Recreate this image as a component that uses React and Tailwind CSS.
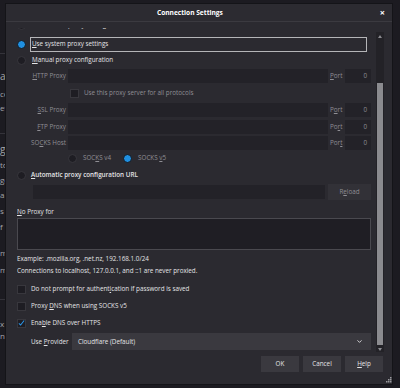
import { ChevronDown } from 'lucide-react';

function Radio({ on }) {
  return (
    <span
      className={
        on
          ? 'block w-[9px] h-[9px] shrink-0 rounded-full bg-[#1f8fe0] border border-[#16161b]'
          : 'block w-[9px] h-[9px] shrink-0 rounded-full bg-[#1e1d23] border border-[#38373d]'
      }
    />
  );
}

function Check({ on }) {
  return (
    <span className="flex items-center justify-center w-[9px] h-[9px] shrink-0 bg-[#1e1d23] border border-[#38373d]">
      {on && (
        <svg width="8" height="8" viewBox="0 0 8 8" fill="none">
          <path d="M1 4.3 L3 6.3 L7 1.2" stroke="#2a97ea" strokeWidth="1.2" />
        </svg>
      )}
    </span>
  );
}

function K({ children }) {
  return <span className="underline underline-offset-1">{children}</span>;
}

function ProxyRow({ label, port, mt }) {
  return (
    <div className={`flex items-center h-[14px] ${mt}`}>
      <span className="w-[51px] pr-[2px] text-right text-[#8f8e94]">{label}</span>
      <div className="flex-1 h-full bg-[#232228]" />
      <span className="w-[17px] pl-[2px] text-[#8f8e94]">{port}</span>
      <div className="w-[26px] h-full bg-[#232228] text-right pr-[4px] leading-[14px] text-[#8f8e94]">0</div>
    </div>
  );
}

export default function App() {
  return (
    <div className="w-[400px] h-[388px] flex overflow-hidden bg-[#1c1b21] text-[6.3px] text-[#e4e4e6] font-['Open_Sans',sans-serif]">
      {/* page behind the dialog */}
      <div className="w-[5px] shrink-0 overflow-hidden whitespace-nowrap text-[#a3a3a8] text-[8px] leading-[10px]">
        <div className="mt-[53px] border-t border-[#34333a]" />
        <div className="mt-[17px] text-[10px]">adv</div>
        <div className="mt-[8px]">conn</div>
        <div className="mt-[4px]">etw</div>
        <div className="mt-[20px] border-t border-[#34333a]" />
        <div className="mt-[10px] text-[10px]">gen</div>
        <div className="mt-[6px]">to</div>
        <div className="mt-[5px]">gc</div>
        <div className="mt-[5px]">a</div>
        <div className="mt-[6px]">s U</div>
        <div className="mt-[6px]">f</div>
        <div className="mt-[16px]">m</div>
        <div className="mt-[7px]">m</div>
        <div className="mt-[24px] border-t border-[#34333a]" />
        <div className="mt-[19px]">x</div>
        <div className="mt-[2px]">nc</div>
      </div>

      {/* dialog */}
      <div className="mt-[3px] w-[388px] h-[382px] shrink-0 flex flex-col bg-[#2b2a30] border border-[#141418]">
        {/* title bar */}
        <div className="h-[18px] shrink-0 flex items-center border-b border-[#3b3a40] bg-[#2c2b31]">
          <span className="pl-[151px] font-bold text-[6.6px] text-white">Connection Settings</span>
          <span className="ml-auto mr-[7px] text-[9px] font-bold text-white leading-none">×</span>
        </div>

        <div className="flex-1 flex flex-col pl-[11px] pr-[8px]">
          <div className="mt-[6px] h-[324px] flex gap-[5px]">
            {/* scrolled content */}
            <div className="flex-1 overflow-hidden">
              <div className="flex flex-col">
                <div className="-mt-[11px] h-[16px] flex items-center gap-[6px]">
                  <Radio />
                  <span>Auto-detect proxy settings for this network</span>
                </div>
                <div className="mt-[3px] h-[16px] flex items-center gap-[4px]">
                  <Radio on />
                  <span className="flex-1 h-[15px] flex items-center pl-[1px] border border-[#b5b5b8] mr-[4px]">
                    <span><K>U</K>se system proxy settings</span>
                  </span>
                </div>
                <div className="h-[16px] flex items-center gap-[6px]">
                  <Radio />
                  <span><K>M</K>anual proxy configuration</span>
                </div>

                <ProxyRow mt="mt-[1px]" label={<><K>H</K>TTP Proxy</>} port={<><K>P</K>ort</>} />
                <div className="mt-[2px] h-[16px] flex items-center gap-[5px] pl-[53px] text-[#8f8e94]">
                  <Check />
                  <span>Use this proxy server for all protocols</span>
                </div>
                <ProxyRow mt="mt-[2px]" label={<><K>S</K>SL Proxy</>} port={<>P<K>o</K>rt</>} />
                <ProxyRow mt="mt-[3px]" label={<><K>F</K>TP Proxy</>} port={<>Po<K>r</K>t</>} />
                <ProxyRow mt="mt-[2px]" label={<>SO<K>C</K>KS Host</>} port={<>Por<K>t</K></>} />
                <div className="h-[16px] flex items-center pl-[51px] text-[#8f8e94]">
                  <Radio />
                  <span className="ml-[6px]">SOC<K>K</K>S v4</span>
                  <span className="ml-[12px]"><Radio on /></span>
                  <span className="ml-[6px]">SOCKS <K>v</K>5</span>
                </div>
                <div className="mt-[1px] h-[16px] flex items-center gap-[5px]">
                  <Radio />
                  <span className="font-semibold"><K>A</K>utomatic proxy configuration URL</span>
                </div>
                <div className="mt-[1px] h-[16px] flex items-center pl-[16px]">
                  <div className="flex-1 h-[14px] bg-[#232228]" />
                  <div className="ml-[3px] w-[43px] h-[16px] flex items-center justify-center bg-[#323137] text-[#8f8e94]">
                    R<K>e</K>load
                  </div>
                </div>

                <div className="mt-[6px] h-[12px] flex items-center">
                  <span><K>N</K>o Proxy for</span>
                </div>
                <div className="h-[32px] bg-[#1f1e24] border border-[#4a494f]" />
                <div className="mt-[3px] h-[12px] flex items-center">Example: .mozilla.org, .net.nz, 192.168.1.0/24</div>
                <div className="h-[12px] flex items-center">Connections to localhost, 127.0.0.1, and ::1 are never proxied.</div>

                <div className="mt-[4px] h-[16px] flex items-center gap-[5px]">
                  <Check />
                  <span>Do not prompt for authent<K>i</K>cation if password is saved</span>
                </div>
                <div className="mt-[1px] h-[16px] flex items-center gap-[5px]">
                  <Check />
                  <span>Proxy <K>D</K>NS when using SOCKS v5</span>
                </div>
                <div className="mt-[1px] h-[16px] flex items-center gap-[5px]">
                  <Check on />
                  <span>Ena<K>b</K>le DNS over HTTPS</span>
                </div>
                <div className="mt-[2px] h-[17px] flex items-center pl-[14px]">
                  <span className="w-[41px]">Use <K>P</K>rovider</span>
                  <div className="flex-1 h-full flex items-center bg-[#3a393f] pl-[6px] pr-[8px]">
                    <span>Cloudflare (Default)</span>
                    <ChevronDown className="ml-auto" size={7} strokeWidth={3} />
                  </div>
                </div>
              </div>
            </div>

            {/* scrollbar */}
            <div className="mt-[4px] w-[8px] flex flex-col items-center bg-[#232227]">
              <div className="h-[8px] flex items-center justify-center">
                <span className="block w-0 h-0 border-l-[2.5px] border-r-[2.5px] border-b-[3px] border-l-transparent border-r-transparent border-b-[#8b8b90]" />
              </div>
              <div className="mt-[43px] w-[6px] h-[262px] bg-[#8b8b8f]" />
              <div className="mt-[1px] h-[6px] flex items-center justify-center">
                <span className="block w-0 h-0 border-l-[2.5px] border-r-[2.5px] border-t-[3px] border-l-transparent border-r-transparent border-t-[#8b8b90]" />
              </div>
            </div>
          </div>

          {/* buttons */}
          <div className="mt-[4px] h-[16px] flex justify-end gap-[4px] pr-[1px]">
            <button className="w-[38px] h-full bg-[#3a393f] text-[#e4e4e6]">OK</button>
            <button className="w-[38px] h-full bg-[#3a393f] text-[#e4e4e6]">Cancel</button>
            <button className="w-[38px] h-full bg-[#3a393f] text-[#e4e4e6]"><K>H</K>elp</button>
          </div>
          <div className="mt-auto mb-[1px] -mr-[8px] self-end">
            <svg width="6" height="6" viewBox="0 0 6 6">
              <rect x="4" y="0" width="1.5" height="1.5" fill="#9a9a9e" />
              <rect x="2" y="2" width="1.5" height="1.5" fill="#9a9a9e" />
              <rect x="4" y="2" width="1.5" height="1.5" fill="#9a9a9e" />
              <rect x="0" y="4" width="1.5" height="1.5" fill="#9a9a9e" />
              <rect x="2" y="4" width="1.5" height="1.5" fill="#9a9a9e" />
              <rect x="4" y="4" width="1.5" height="1.5" fill="#9a9a9e" />
            </svg>
          </div>
        </div>
      </div>
    </div>
  );
}
